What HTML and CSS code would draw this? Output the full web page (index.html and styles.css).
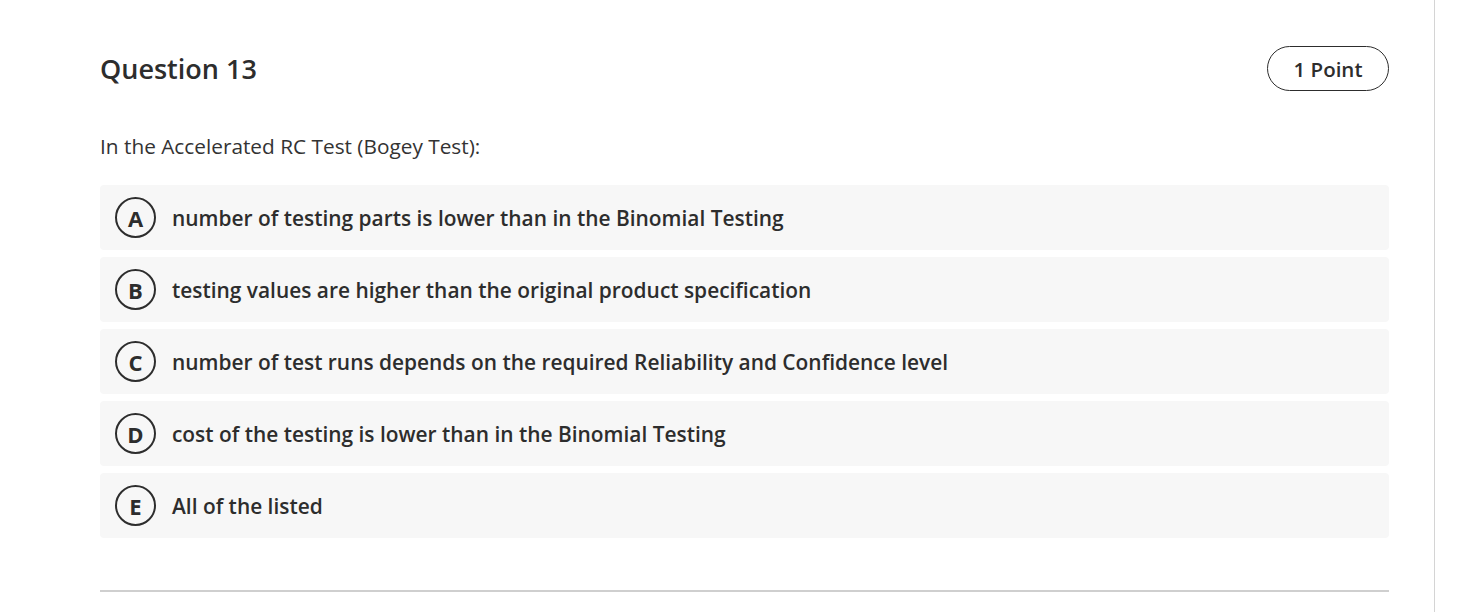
FILE: index.html
```html
<!DOCTYPE html>
<html>
<head>
<meta charset="utf-8">
<link rel="stylesheet" href="styles.css">
</head>
<body>
<div class="page">
  <main class="main">
    <section class="question">
      <header class="q-head">
        <h2 class="q-title">Question 13</h2>
        <span class="q-points">1 Point</span>
      </header>
      <p class="q-text">In the Accelerated RC Test (Bogey Test):</p>
      <ul class="options">
        <li class="option"><span class="letter">A</span><span class="opt-text">number of testing parts is lower than in the Binomial Testing</span></li>
        <li class="option"><span class="letter">B</span><span class="opt-text">testing values are higher than the original product specification</span></li>
        <li class="option"><span class="letter">C</span><span class="opt-text">number of test runs depends on the required Reliability and Confidence level</span></li>
        <li class="option"><span class="letter">D</span><span class="opt-text">cost of the testing is lower than in the Binomial Testing</span></li>
        <li class="option"><span class="letter">E</span><span class="opt-text">All of the listed</span></li>
      </ul>
      <hr class="divider">
    </section>
  </main>
</div>
</body>
</html>
```

FILE: styles.css
```css
* { box-sizing: border-box; }
html, body { margin: 0; padding: 0; background: #fff; }
body {
  font-family: "Open Sans", "Noto Sans", sans-serif;
  color: #2d2d2d;
}
.page { display: flex; height: 612px; overflow: hidden; }
.main {
  width: 1435px;
  border-right: 1px solid #d4d4d4;
  padding: 46px 45px 0 100px;
}
.question { width: 1289px; }
.q-head {
  display: flex;
  align-items: center;
  justify-content: space-between;
}
.q-title {
  margin: 0;
  font-size: 27px;
  font-weight: 600;
  color: #2d2d2d;
}
.q-points {
  display: inline-flex;
  align-items: center;
  justify-content: center;
  width: 122px;
  height: 45px;
  border: 1px solid #2d2d2d;
  border-radius: 23px;
  font-size: 20.5px;
  font-weight: 600;
}
.q-text {
  margin: 0;
  padding-top: 41px;
  font-size: 20.8px;
  line-height: 28px;
  color: #333;
}
.options {
  list-style: none;
  margin: 25px 0 0;
  padding: 0;
  display: flex;
  flex-direction: column;
  gap: 7px;
}
.option {
  display: flex;
  align-items: center;
  height: 65px;
  padding-left: 15px;
  background: #f7f7f7;
  border-radius: 4px;
}
.letter {
  flex: none;
  width: 41px;
  height: 41px;
  border: 2.5px solid #2d2d2d;
  border-radius: 50%;
  display: flex;
  align-items: center;
  justify-content: center;
  font-size: 22px;
  font-weight: 700;
  margin-right: 16px;
}
.opt-text {
  font-size: 20.9px;
  font-weight: 600;
}
.divider {
  margin: 52px 0 0;
  border: 0;
  border-top: 2px solid #cfcfcf;
}
```
